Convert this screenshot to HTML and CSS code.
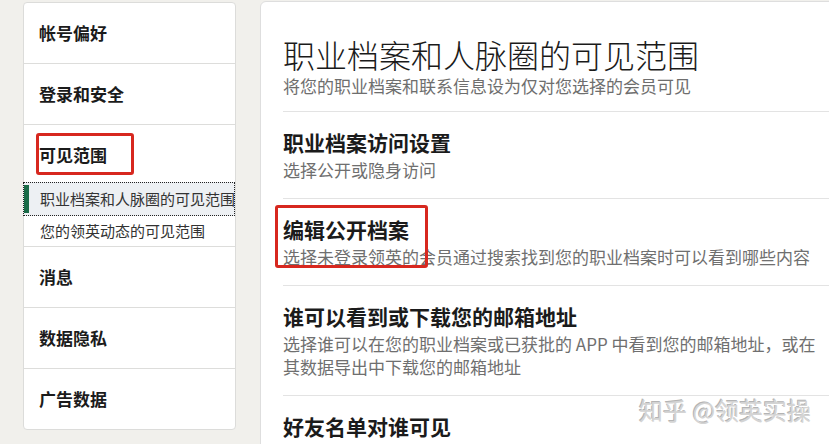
FILE: index.html
```html
<!DOCTYPE html>
<html lang="zh-CN">
<head>
<meta charset="utf-8">
<title>设置与隐私 - 可见范围</title>
<link rel="stylesheet" href="styles.css">
</head>
<body>
<div class="page">
  <nav class="side">
    <div class="side-item"><span class="side-title">帐号偏好</span></div>
    <div class="side-item"><span class="side-title">登录和安全</span></div>
    <div class="side-item side-group">
      <span class="side-title">可见范围</span>
      <span class="mark mark-nav"></span>
      <ul class="side-sub">
        <li class="sub-row is-active">职业档案和人脉圈的可见范围</li>
        <li class="sub-row">您的领英动态的可见范围</li>
      </ul>
    </div>
    <div class="side-item"><span class="side-title">消息</span></div>
    <div class="side-item"><span class="side-title">数据隐私</span></div>
    <div class="side-item last"><span class="side-title">广告数据</span></div>
  </nav>

  <main class="panel">
    <header class="panel-head">
      <h1 class="panel-title">职业档案和人脉圈的可见范围</h1>
      <p class="panel-desc">将您的职业档案和联系信息设为仅对您选择的会员可见</p>
    </header>
    <section class="setting">
      <h2 class="setting-title">职业档案访问设置</h2>
      <p class="setting-desc">选择公开或隐身访问</p>
    </section>
    <section class="setting">
      <h2 class="setting-title">编辑公开档案</h2>
      <p class="setting-desc">选择未登录领英的会员通过搜索找到您的职业档案时可以看到哪些内容</p>
      <span class="mark mark-setting"></span>
    </section>
    <section class="setting">
      <h2 class="setting-title">谁可以看到或下载您的邮箱地址</h2>
      <p class="setting-desc wrap">选择谁可以在您的职业档案或已获批的 APP 中看到您的邮箱地址，或在其数据导出中下载您的邮箱地址</p>
    </section>
    <section class="setting">
      <h2 class="setting-title">好友名单对谁可见</h2>
    </section>
  </main>
</div>
<div class="watermark">知乎 @领英实操</div>
</body>
</html>
```

FILE: styles.css
```css
* {
  box-sizing: border-box;
}

html, body {
  margin: 0;
  padding: 0;
  height: 444px;
  overflow: hidden;
  background: #f1f0ec;
  font-family: "Noto Sans CJK SC", "Noto Sans", sans-serif;
  color: #1d1d1d;
}

.page {
  display: flex;
  align-items: flex-start;
  gap: 24px;
  padding: 1px 0 0 23px;
  width: 1100px;
}

/* left navigation card */
.side {
  width: 213px;
  margin-top: 1px;
  background: #fff;
  border: 1px solid #dcdcda;
  border-radius: 4px;
  display: flex;
  flex-direction: column;
}

.side-item {
  position: relative;
  height: 61px;
  padding: 17px 0 0 15px;
  border-bottom: 1px solid #dddddb;
}

.side-item.last {
  height: 60px;
  border-bottom: none;
}

.side-title {
  display: block;
  font-size: 17px;
  line-height: 26px;
  font-weight: 700;
  color: #1b1b1b;
}

.side-group {
  height: auto;
  padding-bottom: 0;
}

.side-sub {
  list-style: none;
  margin: 14px 0 0 -15px;
  padding: 0;
}

.sub-row {
  font-size: 15px;
  color: #333;
  padding-left: 16px;
  height: 30px;
  line-height: 30px;
  white-space: nowrap;
}

.sub-row.is-active {
  position: relative;
  height: 34px;
  line-height: 34px;
  background: #edf0f3;
  outline: 1px dotted #222;
  outline-offset: -1px;
  margin-left: -1px;
  padding-left: 17px;
}

.sub-row.is-active::before {
  content: "";
  position: absolute;
  left: 1px;
  top: 3px;
  bottom: 3px;
  width: 5px;
  background: #1a6b47;
}

/* red annotation frames */
.mark {
  position: absolute;
  border: 3px solid #d7281f;
  border-radius: 3px;
  pointer-events: none;
}

.mark-nav {
  left: 12px;
  top: 8px;
  width: 98px;
  height: 42px;
}

.mark-setting {
  left: -8px;
  top: 6px;
  width: 153px;
  height: 63px;
}

/* right content panel */
.panel {
  width: 820px;
  background: #fff;
  border: 1px solid #dedede;
  border-radius: 6px;
  padding: 0 0 0 22px;
  min-height: 460px;
}

.panel-head {
  padding: 34px 0 15px;
  border-bottom: 1px solid #e3e3e3;
}

.panel-title {
  margin: 0;
  font-size: 32px;
  line-height: 36px;
  font-weight: 300;
  color: #1a1a1a;
}

.panel-desc {
  margin: 3px 0 0;
  font-size: 17px;
  line-height: 21px;
  color: #6e6e6e;
}

.setting {
  position: relative;
  padding: 17px 0 17px;
  border-bottom: 1px solid #e3e3e3;
}

.setting-title {
  margin: 0;
  font-size: 21px;
  line-height: 26px;
  font-weight: 700;
  color: #1b1b1b;
}

.setting-desc {
  margin: 3px 0 0;
  font-size: 17px;
  line-height: 23px;
  color: #6f6f6f;
}

.setting-desc.wrap {
  max-width: 545px;
}

/* site watermark in the corner */
.watermark {
  position: absolute;
  left: 639px;
  top: 394px;
  font-size: 24px;
  line-height: 32px;
  color: #d4d4d4;
  text-shadow: 1px 1px 0 #fff, -1px -1px 0 #b4b4b4;
}
```
